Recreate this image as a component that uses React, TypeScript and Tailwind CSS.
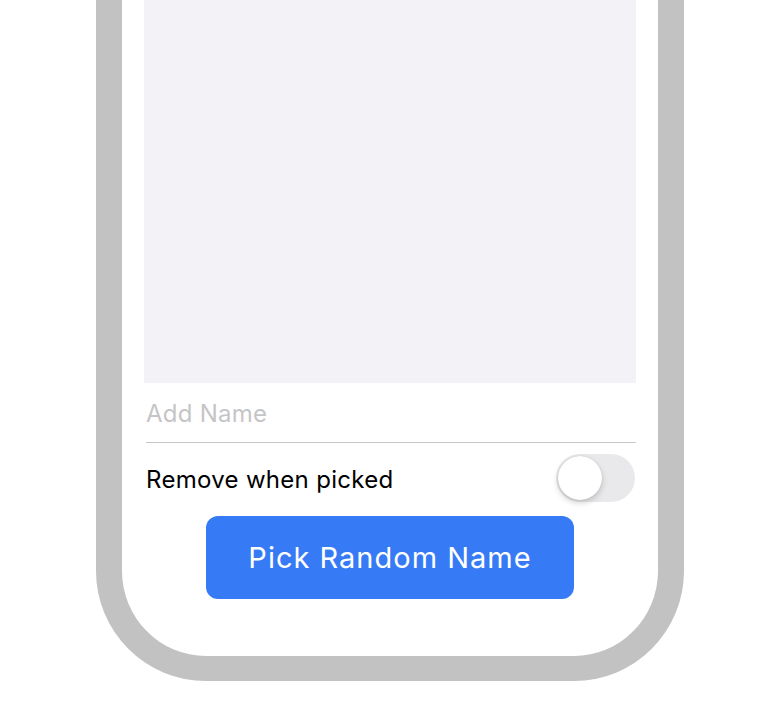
export default function App() {
  return (
    <div className="w-[780px] h-[702px] bg-white overflow-hidden" style={{ fontFamily: 'Inter, "Noto Sans", sans-serif' }}>
      <div className="ml-[96px] w-[588px] h-[681px] border-x-[26px] border-b-[25px] border-[#c2c2c2] rounded-b-[110px] bg-white">
        <div className="flex flex-col px-[22px]">
          {/* name list */}
          <div className="h-[383px] bg-[#f2f2f7]" />

          {/* text field */}
          <div className="h-[59px] flex items-center pl-[2px] pt-[2px] text-[24px] tracking-[0.25px] text-[#c5c5c7]">Add Name</div>
          <div className="ml-[2px] h-px bg-[#c8c8c8]" />

          {/* toggle row */}
          <div className="h-[70px] flex items-center justify-between pl-[2px] pr-[1px]">
            <span className="pt-[3px] text-[24px] tracking-[0.3px] text-black">Remove when picked</span>
            <div className="w-[79px] h-[48px] rounded-full bg-[#e9e9eb] flex items-center px-[2px]">
              <div className="w-[44px] h-[44px] rounded-full bg-white shadow-[0_3px_6px_rgba(0,0,0,0.18),0_0_1px_rgba(0,0,0,0.2)]" />
            </div>
          </div>

          <div className="flex justify-center mt-[3px]">
            <button className="w-[368px] h-[83px] rounded-[12px] bg-[#367bf5] text-white text-[29px] tracking-[1px]">
              Pick Random Name
            </button>
          </div>
        </div>
      </div>
    </div>
  )
}
